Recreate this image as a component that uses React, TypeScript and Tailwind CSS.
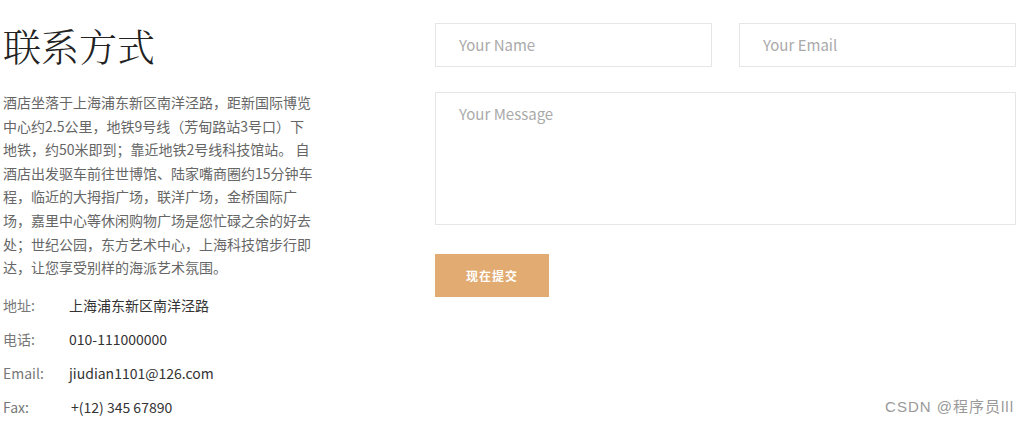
import React from "react";

export default function App() {
  const cjk = { fontFamily: '"Microsoft YaHei", "Noto Sans CJK SC", "Noto Sans", sans-serif' };
  return (
    <div className="relative w-[1027px] h-[424px] bg-white overflow-hidden" style={cjk}>
      <div className="flex">
        <div className="w-[318px] pl-[3px] pt-[20px]">
          <h1 className="text-[38px] leading-[50px] font-light text-[#222]" style={{ fontFamily: '"Noto Serif CJK SC", "Noto Sans CJK SC", serif' }}>联系方式</h1>
          <p className="mt-[21px] w-[314px] text-[14px] leading-[23.6px] text-[#666]">
            酒店坐落于上海浦东新区南洋泾路，距新国际博览中心约2.5公里，地铁9号线（芳甸路站3号口）下地铁，约50米即到；靠近地铁2号线科技馆站。 自酒店出发驱车前往世博馆、陆家嘴商圈约15分钟车程，临近的大拇指广场，联洋广场，金桥国际广场，嘉里中心等休闲购物广场是您忙碌之余的好去处；世纪公园，东方艺术中心，上海科技馆步行即达，让您享受别样的海派艺术氛围。
          </p>
          <div className="mt-[13px] flex flex-col gap-[10px] text-[14px] leading-[24px]">
            <div className="flex"><span className="w-[66px] text-[#777]">地址:</span><span className="text-[#333]">上海浦东新区南洋泾路</span></div>
            <div className="flex"><span className="w-[66px] text-[#777]">电话:</span><span className="text-[#333]">010-111000000</span></div>
            <div className="flex"><span className="w-[66px] text-[#777]">Email:</span><span className="text-[#333]">jiudian1101@126.com</span></div>
            <div className="flex"><span className="w-[66px] text-[#777]">Fax:</span><span className="text-[#333] pl-[2px]">+(12) 345 67890</span></div>
          </div>
        </div>
        <div className="ml-[117px] w-[581px] pt-[23px]">
          <div className="flex gap-[27px]">
            <div className="flex-1 h-[44px] border border-[#e6e6e6] px-[23px] flex items-center text-[15px] text-[#aaa]">Your Name</div>
            <div className="flex-1 h-[44px] border border-[#e6e6e6] px-[23px] flex items-center text-[15px] text-[#aaa]">Your Email</div>
          </div>
          <div className="mt-[25px] h-[133px] border border-[#e6e6e6] px-[23px] pt-[10px] text-[15px] leading-[22px] text-[#aaa]">Your Message</div>
          <button className="mt-[29px] w-[114px] h-[43px] bg-[#e2ab72] text-white text-[12px] font-bold tracking-[1px]">现在提交</button>
        </div>
      </div>
      <div className="absolute right-[13px] top-[396px] text-[15px] leading-[22px] tracking-[1px] text-[#999]" style={{ fontFamily: '"Liberation Sans", "Noto Sans CJK SC", sans-serif' }}>CSDN @程序员lll</div>
    </div>
  );
}
